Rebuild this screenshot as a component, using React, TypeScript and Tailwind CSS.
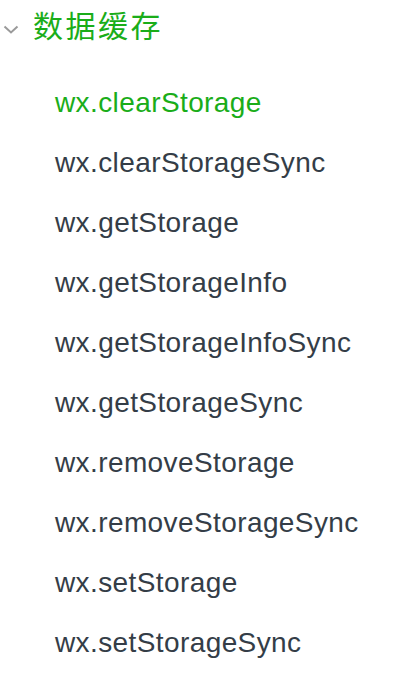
const items = [
  "wx.clearStorage",
  "wx.clearStorageSync",
  "wx.getStorage",
  "wx.getStorageInfo",
  "wx.getStorageInfoSync",
  "wx.getStorageSync",
  "wx.removeStorage",
  "wx.removeStorageSync",
  "wx.setStorage",
  "wx.setStorageSync",
];

export default function App() {
  return (
    <div className="w-[410px] h-[676px] bg-white overflow-hidden font-['Liberation_Sans','Noto_Sans_CJK_SC',sans-serif]">
      <div className="flex items-center h-[54px]">
        <svg width="16" height="9" viewBox="0 0 16 9" className="ml-[3px] mt-[4px]">
          <path d="M1.5 1.5 L8 7.5 L14.5 1.5" fill="none" stroke="#9a9a9a" strokeWidth="2" />
        </svg>
        <span className="ml-[14px] text-[30px] leading-none text-[#1aad19] tracking-[2.5px]">数据缓存</span>
      </div>
      <ul className="pt-[19px]">
        {items.map((item, key) => (
          <li
            key={key}
            className={
              "h-[60px] pl-[55px] flex items-center text-[28px] tracking-[0.4px] " +
              (key === 0 ? "text-[#1aad19]" : "text-[#343d47]")
            }
          >
            {item}
          </li>
        ))}
      </ul>
    </div>
  );
}
